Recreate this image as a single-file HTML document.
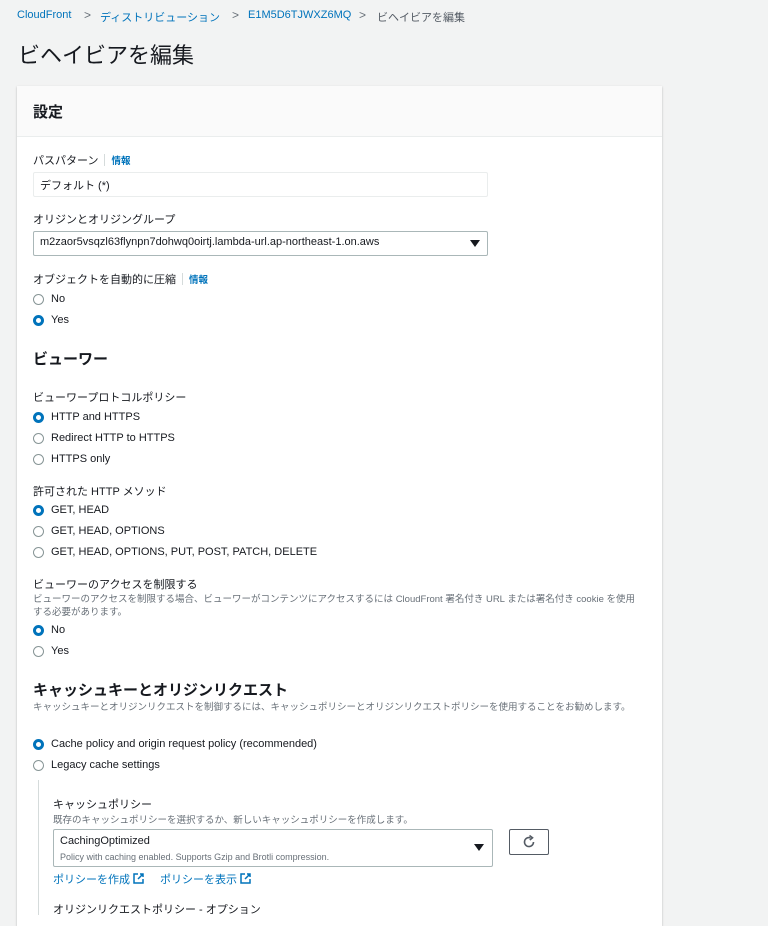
<!DOCTYPE html>
<html><head><meta charset="utf-8"><style>
*{margin:0;padding:0;box-sizing:border-box}
body{width:768px;height:915px;background:#f2f3f3;font-family:"Liberation Sans","Noto Sans CJK JP",sans-serif;color:#16191f;font-size:11px;position:relative;overflow:hidden}
.a{position:absolute;white-space:nowrap}
.card{position:absolute;left:17px;top:86px;width:645px;height:840px;background:#fff;box-shadow:0 1px 2px rgba(0,0,0,.25)}
.hd{position:absolute;left:17px;top:86px;width:645px;height:51px;background:#fafafa;border-bottom:1px solid #eaeded}
.lnk{color:#0073bb}
.r{position:absolute;width:11px;height:11px;border-radius:50%;border:1px solid #879596;background:#fff}
.r.on{border:3.5px solid #0073bb}
.lab{font-size:11px;color:#16191f}
.h2{font-size:15px;font-weight:bold}
.sm{font-size:9.5px;color:#687078}
.inp{position:absolute;border:1px solid #aab7b8;background:#fff;border-radius:2px}
.sep{display:inline-block;width:1px;height:12px;background:#d5dbdb;margin:0 6px;vertical-align:-2px}
.info{color:#0073bb;font-size:9.5px;font-weight:bold}
.tri{position:absolute;width:0;height:0;border-left:5px solid transparent;border-right:5px solid transparent;border-top:7px solid #16191f}
</style></head><body>
<div class="a lnk" style="left:17px;top:9px;font-size:11px">CloudFront</div>
<div class="a" style="left:84px;top:8px;color:#687078;font-size:12px">&gt;</div>
<div class="a lnk" style="left:100px;top:9px">ディストリビューション</div>
<div class="a" style="left:232px;top:8px;color:#687078;font-size:12px">&gt;</div>
<div class="a lnk" style="left:248px;top:9px">E1M5D6TJWXZ6MQ</div>
<div class="a" style="left:359px;top:8px;color:#687078;font-size:12px">&gt;</div>
<div class="a" style="left:377px;top:9px;color:#545b64">ビヘイビアを編集</div>
<div class="a" style="left:18px;top:38px;font-size:22px">ビヘイビアを編集</div>
<div class="card"></div><div class="hd"></div>
<div class="a h2" style="left:33px;top:101px">設定</div>

<div class="a lab" style="left:33px;top:152px">パスパターン<span class="sep"></span><span class="info">情報</span></div>
<div class="inp" style="left:33px;top:172px;width:455px;height:25px;border-color:#eaeded"></div>
<div class="a lab" style="left:40px;top:177px">デフォルト (*)</div>

<div class="a lab" style="left:33px;top:211px">オリジンとオリジングループ</div>
<div class="inp" style="left:33px;top:231px;width:455px;height:25px"></div>
<div class="a lab" style="left:40px;top:236px">m2zaor5vsqzl63flynpn7dohwq0oirtj.lambda-url.ap-northeast-1.on.aws</div>
<div class="tri" style="left:470px;top:240px"></div>

<div class="a lab" style="left:33px;top:271px">オブジェクトを自動的に圧縮<span class="sep"></span><span class="info">情報</span></div>
<div class="r" style="left:33px;top:294px"></div><div class="a lab" style="left:51px;top:293px">No</div>
<div class="r on" style="left:33px;top:315px"></div><div class="a lab" style="left:51px;top:314px">Yes</div>

<div class="a h2" style="left:33px;top:348px">ビューワー</div>
<div class="a lab" style="left:33px;top:389px">ビューワープロトコルポリシー</div>
<div class="r on" style="left:33px;top:412px"></div><div class="a lab" style="left:51px;top:411px">HTTP and HTTPS</div>
<div class="r" style="left:33px;top:433px"></div><div class="a lab" style="left:51px;top:432px">Redirect HTTP to HTTPS</div>
<div class="r" style="left:33px;top:454px"></div><div class="a lab" style="left:51px;top:453px">HTTPS only</div>

<div class="a lab" style="left:33px;top:483px">許可された HTTP メソッド</div>
<div class="r on" style="left:33px;top:505px"></div><div class="a lab" style="left:51px;top:504px">GET, HEAD</div>
<div class="r" style="left:33px;top:526px"></div><div class="a lab" style="left:51px;top:525px">GET, HEAD, OPTIONS</div>
<div class="r" style="left:33px;top:547px"></div><div class="a lab" style="left:51px;top:546px">GET, HEAD, OPTIONS, PUT, POST, PATCH, DELETE</div>

<div class="a lab" style="left:33px;top:576px">ビューワーのアクセスを制限する</div>
<div class="a sm" style="left:33px;top:591px">ビューワーのアクセスを制限する場合、ビューワーがコンテンツにアクセスするには CloudFront 署名付き URL または署名付き cookie を使用</div>
<div class="a sm" style="left:33px;top:604px">する必要があります。</div>
<div class="r on" style="left:33px;top:625px"></div><div class="a lab" style="left:51px;top:624px">No</div>
<div class="r" style="left:33px;top:646px"></div><div class="a lab" style="left:51px;top:645px">Yes</div>

<div class="a h2" style="left:33px;top:679px">キャッシュキーとオリジンリクエスト</div>
<div class="a sm" style="left:33px;top:699px">キャッシュキーとオリジンリクエストを制御するには、キャッシュポリシーとオリジンリクエストポリシーを使用することをお勧めします。</div>
<div class="r on" style="left:33px;top:739px"></div><div class="a lab" style="left:51px;top:738px">Cache policy and origin request policy (recommended)</div>
<div class="r" style="left:33px;top:760px"></div><div class="a lab" style="left:51px;top:759px">Legacy cache settings</div>

<div class="a" style="left:38px;top:780px;width:1px;height:135px;background:#d5dbdb"></div>
<div class="a lab" style="left:53px;top:796px">キャッシュポリシー</div>
<div class="a sm" style="left:53px;top:812px">既存のキャッシュポリシーを選択するか、新しいキャッシュポリシーを作成します。</div>
<div class="inp" style="left:53px;top:829px;width:440px;height:38px"></div>
<div class="a lab" style="left:60px;top:835px">CachingOptimized</div>
<div class="a sm" style="left:60px;top:852px;font-size:9px">Policy with caching enabled. Supports Gzip and Brotli compression.</div>
<div class="tri" style="left:474px;top:844px"></div>
<div class="inp" style="left:509px;top:829px;width:40px;height:26px;border-color:#545b64"></div>
<svg class="a" style="left:521px;top:834px" width="16" height="16" viewBox="0 0 16 16"><path d="M12.5 8A4.5 4.5 0 1 1 9.5 3.8" fill="none" stroke="#545b64" stroke-width="1.6"/><path d="M8.5 1.5L11.5 3.8L8.8 6" fill="none" stroke="#545b64" stroke-width="1.6"/></svg>
<div class="a lnk" style="left:53px;top:871px">ポリシーを作成 <svg width="11" height="11" viewBox="0 0 11 11" style="vertical-align:-1px"><path d="M5 1H1v9h9V6M7 1h3v3M10 1L5 6" fill="none" stroke="#0073bb" stroke-width="1.5"/></svg></div>
<div class="a lnk" style="left:160px;top:871px">ポリシーを表示 <svg width="11" height="11" viewBox="0 0 11 11" style="vertical-align:-1px"><path d="M5 1H1v9h9V6M7 1h3v3M10 1L5 6" fill="none" stroke="#0073bb" stroke-width="1.5"/></svg></div>
<div class="a lab" style="left:53px;top:901px">オリジンリクエストポリシー - オプション</div>
</body></html>
